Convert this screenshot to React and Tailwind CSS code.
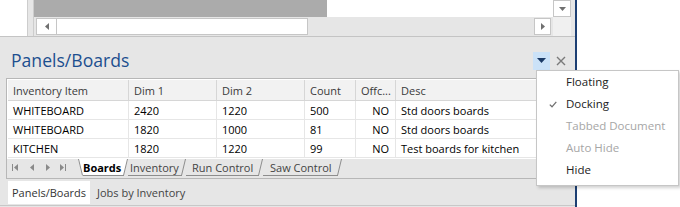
import React from 'react';

const Tri = ({ dir, className = '' }) => {
  const pts = {
    down: '0,0 7,0 3.5,4',
    left: '4,0 4,7 0,3.5',
    right: '0,0 0,7 4,3.5',
  }[dir];
  const w = dir === 'down' ? 7 : 4;
  const h = dir === 'down' ? 4 : 7;
  return (
    <svg width={w} height={h} viewBox={`0 0 ${w} ${h}`} className={className}>
      <polygon points={pts} fill="currentColor" />
    </svg>
  );
};

const Slant = ({ side, active }) => (
  <svg width="5" height="17" viewBox="0 0 5 17" className="shrink-0 block">
    {side === 'left' ? (
      <>
        {active && <polygon points="0,0 5,0 5,17 4.5,17" fill="#fff" />}
        <line x1="0.5" y1="0" x2="4.5" y2="16.5" stroke="#8d8d8d" strokeWidth="1" />
      </>
    ) : (
      <>
        {active && <polygon points="0,0 5,0 0.5,17 0,17" fill="#fff" />}
        <line x1="4.5" y1="0" x2="0.5" y2="16.5" stroke="#8d8d8d" strokeWidth="1" />
        <line x1="0" y1="16.5" x2="1" y2="16.5" stroke="#8d8d8d" strokeWidth="1" />
      </>
    )}
  </svg>
);

const columns = [
  { key: 'item', label: 'Inventory Item', w: 'w-[121px]' },
  { key: 'd1', label: 'Dim 1', w: 'w-[88px]' },
  { key: 'd2', label: 'Dim 2', w: 'w-[88px]' },
  { key: 'count', label: 'Count', w: 'w-[51px]' },
  { key: 'offc', label: 'Offc...', w: 'w-[40px]', right: true },
  { key: 'desc', label: 'Desc', w: 'flex-1' },
];

const rows = [
  { item: 'WHITEBOARD', d1: '2420', d2: '1220', count: '500', offc: 'NO', desc: 'Std doors boards' },
  { item: 'WHITEBOARD', d1: '1820', d2: '1000', count: '81', offc: 'NO', desc: 'Std doors boards' },
  { item: 'KITCHEN', d1: '1820', d2: '1220', count: '99', offc: 'NO', desc: 'Test boards for kitchen' },
];

const tabs = [
  { label: 'Boards', body: 'w-[40px] pl-[0px]', active: true },
  { label: 'Inventory', body: 'w-[53px] pl-[2px]' },
  { label: 'Run Control', body: 'w-[72px] pl-[6px]' },
  { label: 'Saw Control', body: 'w-[74px] pl-[7px]' },
];

const menu = [
  { label: 'Floating' },
  { label: 'Docking', checked: true },
  { label: 'Tabbed Document', disabled: true },
  { label: 'Auto Hide', disabled: true },
  { label: 'Hide' },
];

export default function App() {
  return (
    <div className="w-[680px] h-[207px] relative overflow-hidden bg-white flex font-['Open_Sans',sans-serif] text-[11px] leading-none">
      <div className="w-[575px] flex flex-col bg-[#e6e6e6]">
        {/* Document area above */}
        <div className="h-[37px] flex border-b border-[#c4c4c4]">
          <div className="w-[28px] bg-white border-r border-[#cdcdcd]" />
          <div className="w-[6px] border-r border-[#cdcdcd]" />
          <div className="flex-1 flex flex-col">
            <div className="h-[17px] flex">
              <div className="w-[293px] bg-[#ababab]" />
              <div className="flex-1 bg-white" />
            </div>
            <div className="flex-1 flex items-center px-[2px]">
              <div className="w-[21px] h-[17px] bg-white border border-[#c6c6c6] flex items-center justify-center text-[#707070]">
                <Tri dir="left" />
              </div>
              <div className="w-[252px] h-[17px] bg-white border border-[#c6c6c6] -ml-px" />
              <div className="flex-1" />
              <div className="w-[17px] h-[17px] bg-white border border-[#c6c6c6] flex items-center justify-center text-[#707070]">
                <Tri dir="right" />
              </div>
            </div>
          </div>
          <div className="w-[18px] flex flex-col bg-[#f0f0f0]">
            <div className="h-[17px] bg-white border border-[#c6c6c6] flex items-center justify-center text-[#707070]">
              <Tri dir="down" />
            </div>
          </div>
          <div className="w-[4px]" />
        </div>

        {/* Title */}
        <div className="h-[41px] flex items-center pt-[6px] pl-[11px] pr-[6px]">
          <span className="text-[17.6px] text-[#1d4f8f]">Panels/Boards</span>
          <div className="ml-auto flex items-center gap-[5px]">
            <div className="w-[17px] h-[18px] bg-[#cbe2f8] flex items-center justify-center text-[#1b3a66]">
              <svg width="9" height="5" viewBox="0 0 9 5"><polygon points="0,0 9,0 4.5,5" fill="currentColor" /></svg>
            </div>
            <svg width="12" height="12" viewBox="0 0 12 12" className="mr-[2px]">
              <path d="M2 2 L10 10 M10 2 L2 10" stroke="#7a7a7a" strokeWidth="1.4" />
            </svg>
          </div>
        </div>

        {/* Grid */}
        <div className="ml-[6px] mr-[4px] h-[101px] border border-[#b7b7b7] flex flex-col">
          <div className="border border-white flex flex-col">
            <div className="h-[21px] flex bg-[#f2f2f2] border-b border-[#d6d6d6] text-[#3a3a3a]">
              {columns.map((c) => (
                <div key={c.key} className={`${c.w} flex items-center pl-[5px] border-r border-[#d6d6d6]`}>{c.label}</div>
              ))}
            </div>
            {rows.map((r, i) => (
              <div key={i} className="h-[19px] flex bg-white border-b border-[#e6e6e6] text-black">
                {columns.map((c) => (
                  <div
                    key={c.key}
                    className={`${c.w} flex items-center border-r border-[#e6e6e6] ${c.right ? 'justify-end pr-[6px]' : 'pl-[5px]'}`}
                  >
                    {r[c.key]}
                  </div>
                ))}
              </div>
            ))}
          </div>
          {/* Sheet tabs */}
          <div className="flex-1 flex items-start">
            <div className="flex items-center h-[17px] pl-[5px] gap-[10px] text-[#8a8a8a] w-[71px] shrink-0">
              <div className="flex items-center">
                <div className="w-px h-[7px] bg-current mr-[1px]" />
                <Tri dir="left" />
              </div>
              <Tri dir="left" className="ml-[2px]" />
              <Tri dir="right" className="ml-[2px]" />
              <div className="flex items-center">
                <Tri dir="right" />
                <div className="w-px h-[7px] bg-current ml-[1px]" />
              </div>
            </div>
            <div className="flex h-[17px]">
              {tabs.map((t) => (
                <div key={t.label} className="flex">
                  {t.active && <Slant side="left" active />}
                  <div
                    className={`${t.body} flex items-center border-b border-[#8d8d8d] whitespace-nowrap ${t.active ? 'bg-white font-bold text-black' : 'text-[#444]'}`}
                  >
                    {t.label}
                  </div>
                  <Slant side="right" active={t.active} />
                </div>
              ))}
            </div>
          </div>
        </div>

        {/* Bottom tabs */}
        <div className="flex-1 flex items-start border-b border-[#c8c8c8] mb-[1px] pt-[2px] pl-[8px]">
          <div className="h-[23px] w-[82px] bg-white flex items-center justify-center text-[#333]">Panels/Boards</div>
          <div className="h-[23px] px-[7px] flex items-center text-[#444]">Jobs by Inventory</div>
        </div>
      </div>
      <div className="w-[2px] bg-[#1d3f73]" />
      <div className="flex-1 bg-white" />

      {/* Dock menu */}
      <div className="absolute left-[536px] top-[70px] w-[143px] bg-white border border-[#c6c6c6] shadow-[2px_2px_3px_rgba(0,0,0,0.18)] pb-[4px] text-[11.5px]">
        {menu.map((m) => (
          <div key={m.label} className={`h-[22px] flex items-center ${m.disabled ? 'text-[#a6a6a6]' : 'text-[#222]'}`}>
            <div className="w-[29px] flex justify-center pl-[2px]">
              {m.checked && (
                <svg width="8" height="7" viewBox="0 0 8 7">
                  <path d="M0.8 3.6 L3 5.8 L7.3 0.8" stroke="#6e6e6e" strokeWidth="1.3" fill="none" />
                </svg>
              )}
            </div>
            <span>{m.label}</span>
          </div>
        ))}
      </div>
    </div>
  );
}
